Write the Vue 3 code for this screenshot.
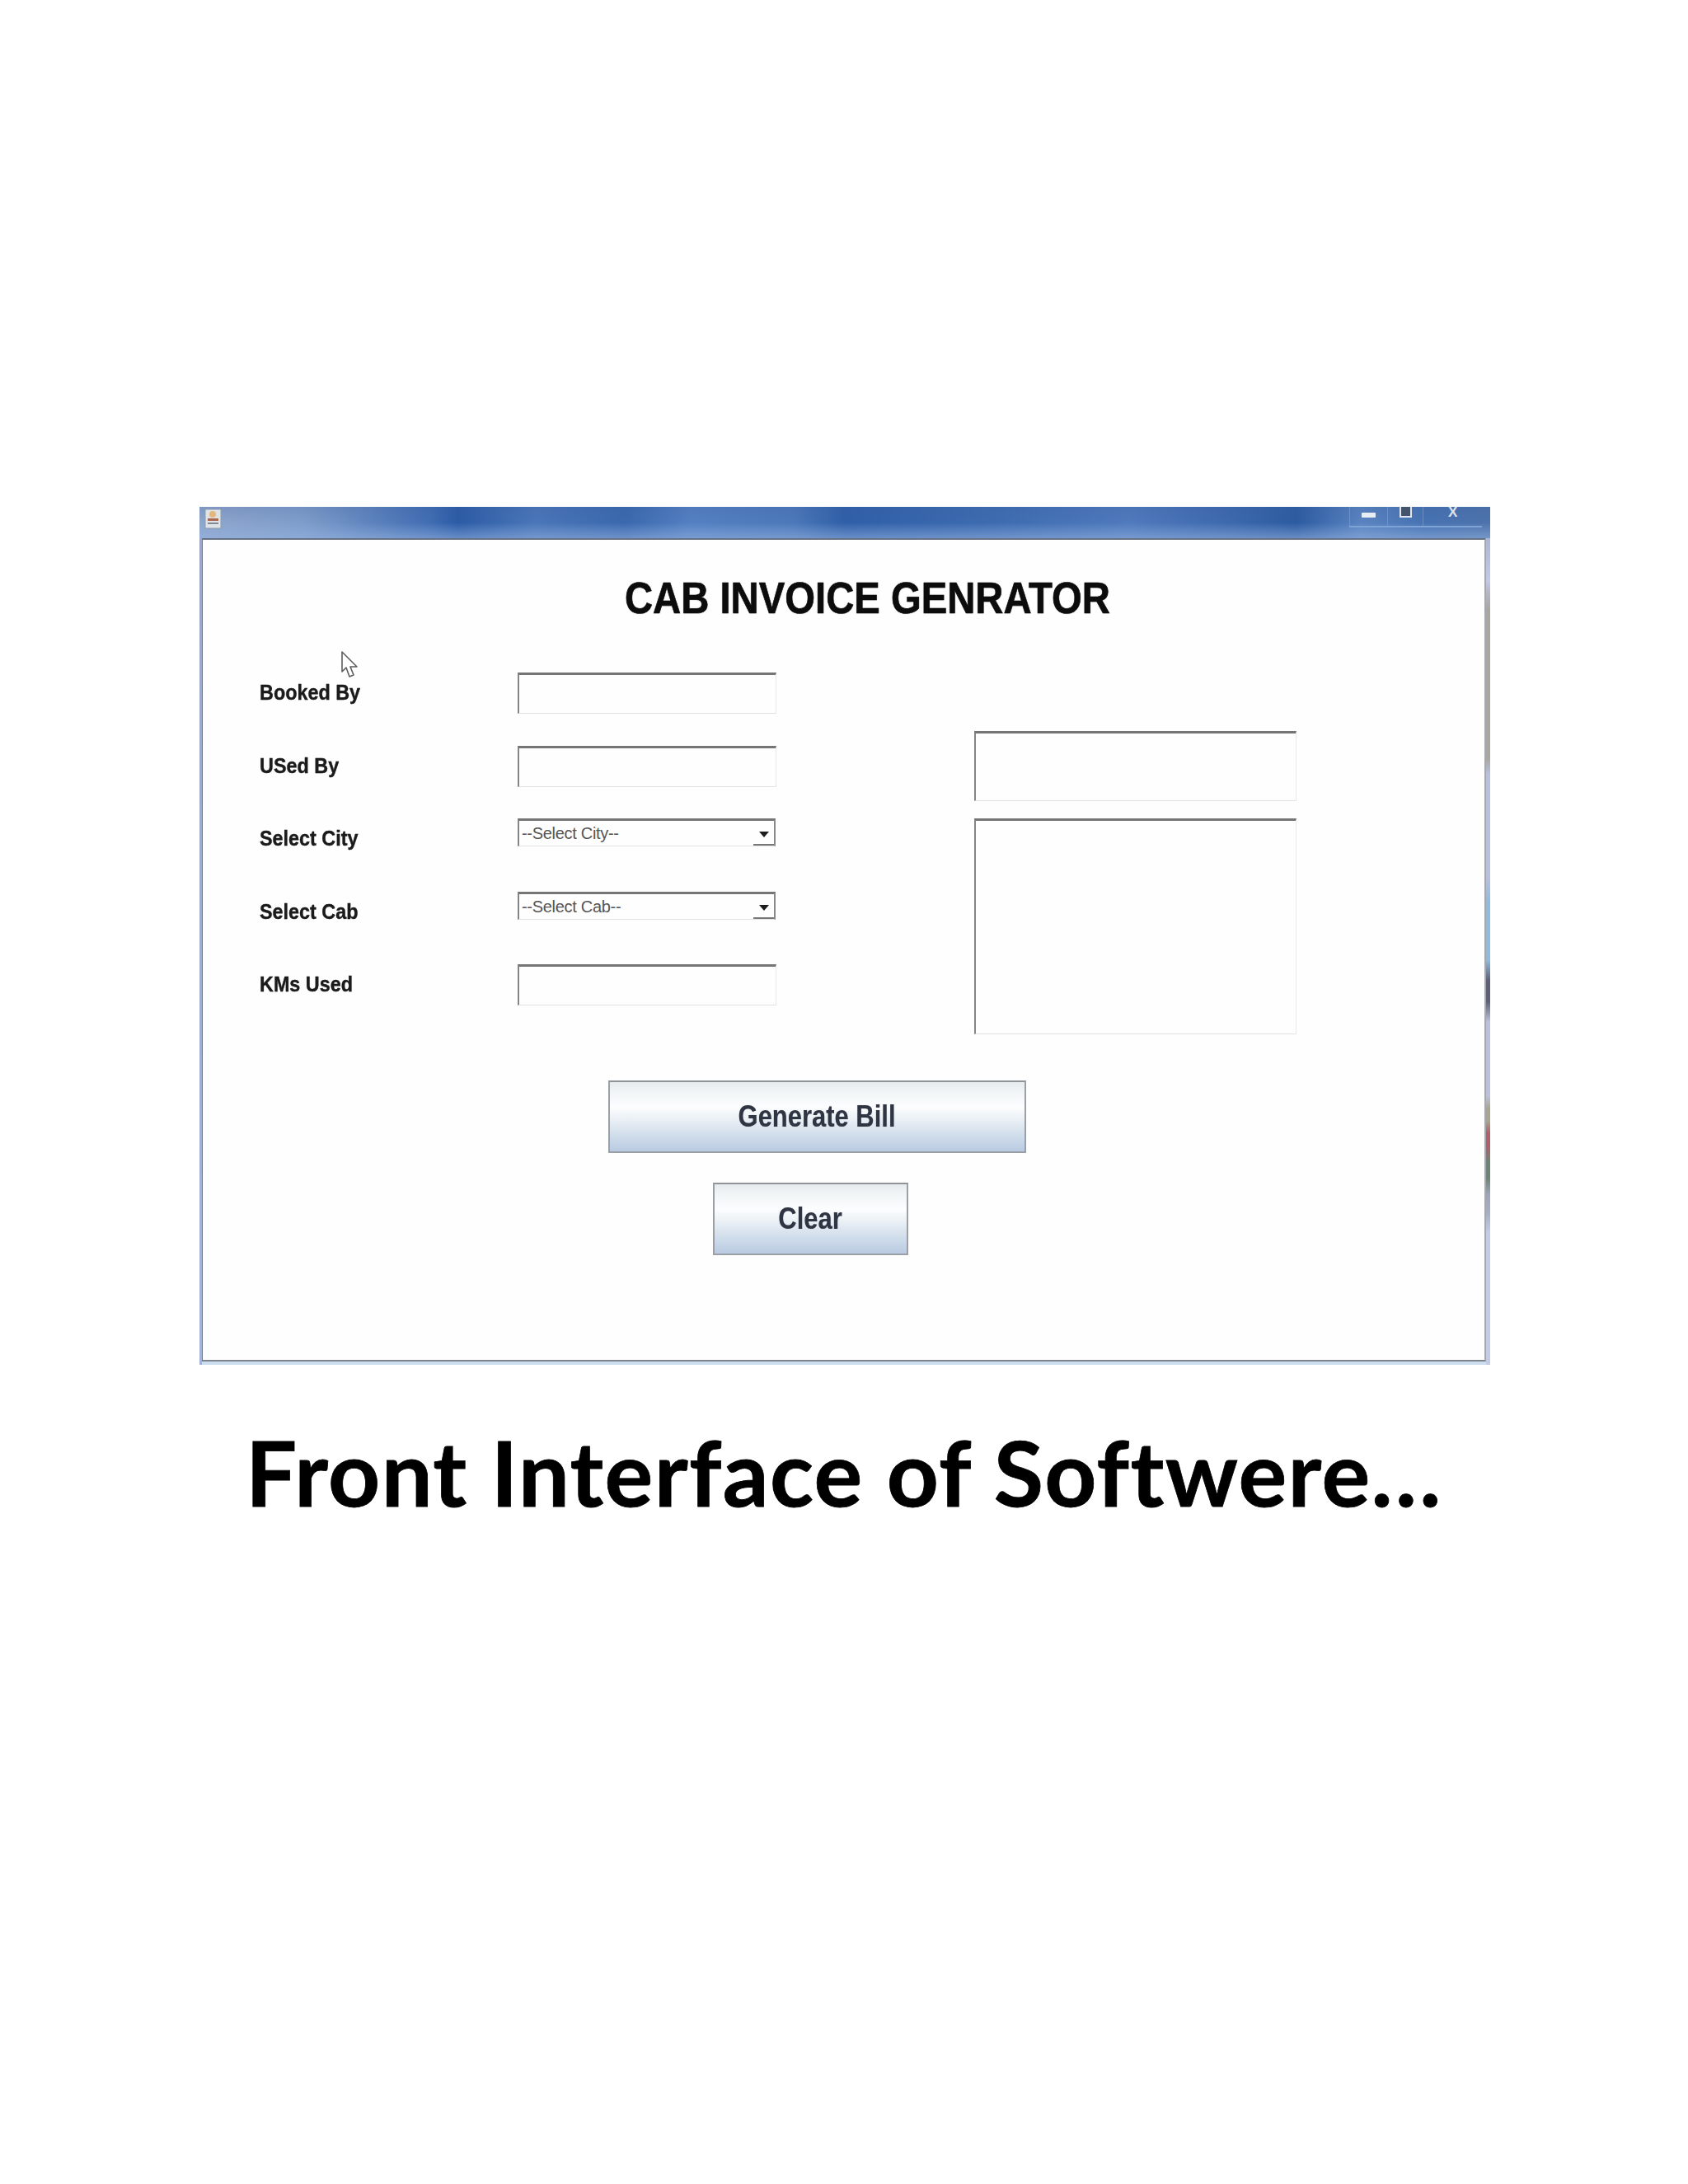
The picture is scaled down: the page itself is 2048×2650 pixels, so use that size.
<script setup>
const rows = [
  { label: 'Booked By', type: 'input' },
  { label: 'USed By', type: 'input' },
  { label: 'Select City', type: 'select', value: '--Select City--' },
  { label: 'Select Cab', type: 'select', value: '--Select Cab--' },
  { label: 'KMs Used', type: 'input' }
]
</script>

<template>
  <div class="page">
    <div class="window">
      <div class="titlebar">
        <svg class="app-icon" viewBox="0 0 21 25" width="21" height="25">
          <rect x="1" y="1" width="19" height="23" fill="#dfe3e6" stroke="#8d9bb0" />
          <circle cx="10" cy="7" r="4" fill="#e5b67c" />
          <rect x="4" y="12" width="13" height="3" fill="#a8674f" />
          <rect x="4" y="17" width="13" height="2" fill="#7f8a94" />
        </svg>
        <div class="controls">
          <div class="ctl ctl-min"><span class="min-bar" /></div>
          <div class="ctl ctl-max"><span class="max-box" /></div>
          <div class="ctl ctl-close"><span class="close-x">X</span></div>
        </div>
      </div>

      <div class="panel">
        <svg class="cursor" viewBox="0 0 20 33" width="20" height="33">
          <path d="M1 1 L1 25 L6 20 L10 31 L15 29 L11 19 L19 19 Z" fill="#fff" stroke="#5d5d5d" stroke-width="1.6" stroke-linejoin="round" />
        </svg>

        <h1 class="heading"><span>CAB INVOICE GENRATOR</span></h1>

        <div class="form">
          <div class="fields">
            <div v-for="row in rows" :key="row.label" class="row">
              <div class="label"><span>{{ row.label }}</span></div>
              <input v-if="row.type === 'input'" class="box text-input" type="text" />
              <div v-else class="box select">
                <span class="select-text">{{ row.value }}</span>
                <span class="select-btn"><i class="arrow" /></span>
              </div>
            </div>
          </div>
          <div class="output">
            <div class="box out-top" />
            <div class="box out-bottom" />
          </div>
        </div>

        <div class="actions">
          <button class="btn btn-generate"><span>Generate Bill</span></button>
          <button class="btn btn-clear"><span>Clear</span></button>
        </div>
      </div>
    </div>

    <h2 class="caption">Front Interface of Softwere…</h2>
  </div>
</template>

<style>
html,
body {
  margin: 0;
  background: #fff;
}
</style>

<style scoped>
.page {
  width: 2048px;
  height: 2650px;
  padding: 615px 0 0 242px;
  box-sizing: border-box;
  background: #fff;
  font-family: "Liberation Sans", Arial, sans-serif;
}

.window {
  width: 1566px;
  height: 1041px;
  display: flex;
  flex-direction: column;
  padding: 0 5px 4px 3px;
  box-sizing: border-box;
  background:
    linear-gradient(180deg,
      #9aa8cc 0, #c3c9e8 90px,
      #b4b6c4 105px, #a9a79e 125px, #a9a79e 305px,
      #b8c0de 325px, #b8c0de 450px,
      #8fbbdf 480px, #8fbbdf 550px,
      #5d6078 575px, #5d6078 600px,
      #bcc0da 625px, #bcc0da 715px,
      #a9a68e 730px, #a9a68e 745px,
      #b0606a 760px, #b0606a 775px,
      #6f8574 795px, #6f8574 815px,
      #9fa6bc 835px, #a5adc4 855px,
      #c3cbe5 880px, #c3cbe5 100%) right / 5px 100% no-repeat,
    linear-gradient(180deg, #9aa6c4 0%, #a2b4d8 100%) left / 3px 100% no-repeat,
    linear-gradient(180deg, #cdddf0 0%, #cdddf0 100%) bottom / 100% 4px no-repeat,
    #fff;
}

.titlebar {
  height: 38px;
  margin: 0 -5px 0 -3px;
  display: flex;
  justify-content: space-between;
  align-items: flex-start;
  flex-shrink: 0;
  background:
    linear-gradient(180deg, rgba(60, 90, 150, 0.18) 0%, rgba(110, 150, 210, 0) 50%, rgba(150, 180, 225, 0.55) 100%),
    linear-gradient(90deg, #8ea6cc 0%, #7f9dca 8%, #3f6cb2 18%, #2b5ba6 20%, #4a76b8 26%, #3a68ae 33%, #5480c2 38%, #4c78b9 46%, #2f5fa8 50%, #3e6cb1 62%, #4f7abc 72%, #3c68ad 80%, #2c5ba1 85%, #5a84c1 90%, #4672b2 95%, #4d73ab 100%);
}

.app-icon {
  margin: 2px 0 0 6px;
  filter: blur(0.7px);
}

.controls {
  width: 161px;
  height: 23px;
  margin-right: 10px;
  display: flex;
  border-bottom: 2px solid #7ea3d6;
  box-sizing: content-box;
}

.ctl {
  position: relative;
  height: 23px;
  display: flex;
  justify-content: center;
  border-left: 1px solid rgba(140, 170, 215, 0.5);
  box-sizing: border-box;
}

.ctl-min {
  width: 46px;
  padding-top: 7px;
}

.ctl-max {
  width: 43px;
}

.ctl-close {
  width: 72px;
  justify-content: flex-start;
  padding-left: 30px;
}

.min-bar {
  width: 17px;
  height: 6px;
  background: #e6edf5;
  border-radius: 1px;
}

.max-box {
  width: 15px;
  height: 13px;
  background: #44546c;
  border: 2px solid #e0e7f0;
  border-top: 0;
  box-sizing: border-box;
}

.close-x {
  font-size: 17px;
  font-weight: 700;
  line-height: 13px;
  color: #dce3ec;
}

.panel {
  position: relative;
  flex: 1;
  background: #fefefe;
  border-top: 2px solid #667184;
  border-left: 1px solid #6d7685;
  border-right: 2px solid #a4a8b2;
  border-bottom: 2px solid #7d838d;
  box-sizing: border-box;
}

.cursor {
  position: absolute;
  left: 168px;
  top: 135px;
}

.heading {
  margin: 0;
  padding: 39px 0 0 512px;
  height: 161px;
  box-sizing: border-box;
  white-space: nowrap;
  font-size: 54px;
  line-height: 62px;
  font-weight: 700;
  color: #0c0c0c;
  -webkit-text-stroke: 0.6px #0c0c0c;
  text-shadow: 0 0 1.5px rgba(0, 0, 0, 0.45);
}

.heading span {
  display: inline-block;
  transform: scaleX(0.875);
  transform-origin: left center;
}

.form {
  display: flex;
  height: 495px;
}

.fields {
  width: 936px;
  flex-shrink: 0;
}

.row {
  height: 88.5px;
  display: flex;
  align-items: flex-start;
}

.label {
  width: 382px;
  padding-left: 69px;
  box-sizing: border-box;
  font-size: 25px;
  line-height: 48px;
  font-weight: 700;
  color: #1b1b1b;
  -webkit-text-stroke: 0.3px #1b1b1b;
  text-shadow: 0 0 1px rgba(0, 0, 0, 0.4);
}

.label span {
  display: inline-block;
  white-space: nowrap;
  transform: scaleX(0.935);
  transform-origin: left center;
}

.box {
  display: block;
  margin: 0;
  padding: 0;
  background: #fefefe;
  border-style: solid;
  border-width: 3px 1px 1px 2px;
  border-color: #757575 #eaeaea #e2e2e2 #858585;
  border-radius: 0;
  outline: none;
  box-sizing: border-box;
}

.text-input {
  width: 314px;
  height: 50px;
}

.select {
  position: relative;
  width: 313px;
  height: 34px;
  border-right: 2px solid #8a8a8a;
}

.select-text {
  position: absolute;
  left: 3px;
  top: 3px;
  font-size: 20px;
  line-height: 24px;
  letter-spacing: -0.3px;
  color: #555;
  white-space: nowrap;
}

.select-btn {
  position: absolute;
  right: 0;
  bottom: 0;
  width: 25px;
  height: 30px;
  display: flex;
  justify-content: center;
  padding-top: 13px;
  border-bottom: 2px solid #777;
  box-sizing: border-box;
}

.arrow {
  width: 0;
  height: 0;
  border-style: solid;
  border-width: 7px 6px 0;
  border-color: #1d1d1d transparent transparent;
}

.output {
  padding-top: 71px;
  display: flex;
  flex-direction: column;
  gap: 21px;
}

.out-top {
  width: 391px;
  height: 85px;
}

.out-bottom {
  width: 391px;
  height: 262px;
}

.actions {
  display: flex;
  flex-direction: column;
  align-items: flex-start;
  gap: 36px;
}

.btn {
  display: flex;
  align-items: center;
  justify-content: center;
  padding: 0;
  font-family: inherit;
  font-size: 36px;
  font-weight: 700;
  color: #2f3542;
  text-shadow: 0 0 1px rgba(40, 45, 60, 0.4);
  border: 2px solid #9aa0a6;
  border-top-color: #8f9499;
  border-radius: 0;
  background: linear-gradient(180deg, #e6ebee 0%, #f1f5f6 15%, #fcfdfe 36%, #e9eff5 55%, #cfdcea 78%, #b9cbe2 100%);
  box-sizing: border-box;
}

.btn span {
  display: inline-block;
  transform: scaleX(0.86);
}

.btn-generate {
  width: 507px;
  height: 88px;
  margin-left: 492px;
}

.btn-clear {
  width: 237px;
  height: 88px;
  margin-left: 619px;
}

.caption {
  margin: 0;
  padding: 64px 0 0 56px;
  white-space: nowrap;
  font-family: Lato, "Open Sans", sans-serif;
  font-size: 110px;
  line-height: 130px;
  font-weight: 700;
  letter-spacing: 1.4px;
  -webkit-text-stroke: 0.8px #000;
  color: #000;
}
</style>
